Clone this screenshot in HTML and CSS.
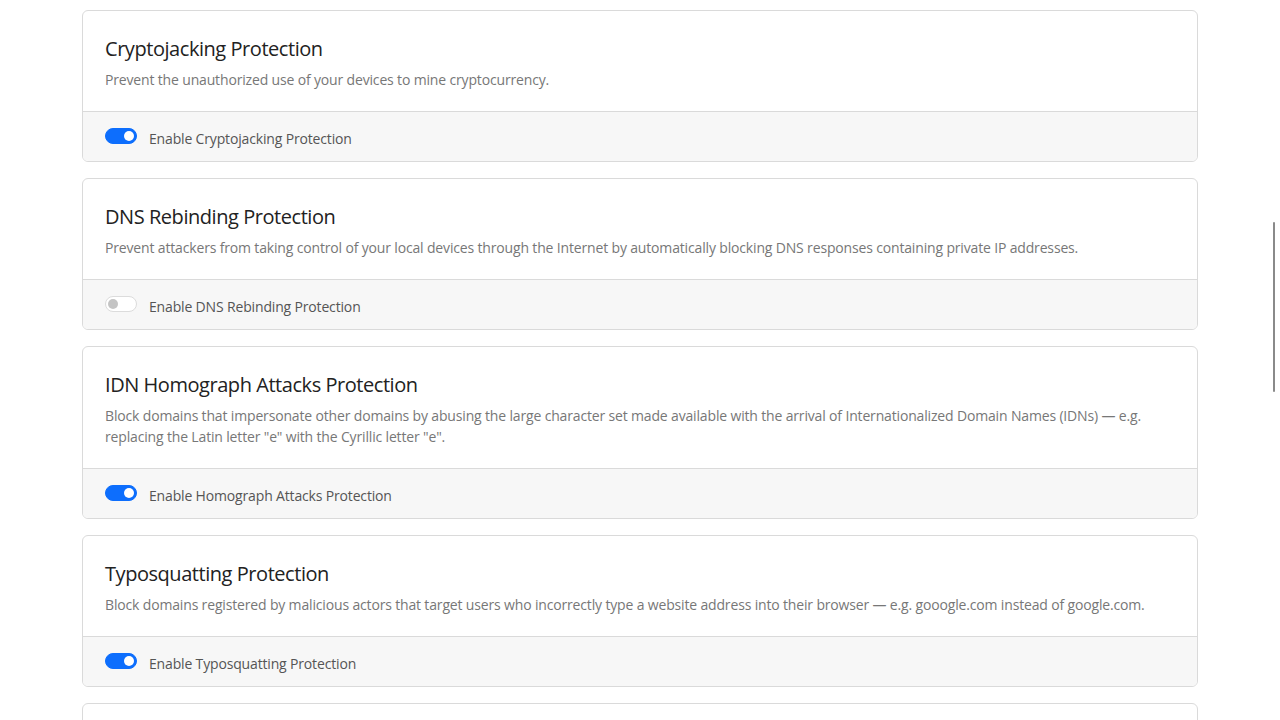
FILE: index.html
```html
<!DOCTYPE html>
<html lang="en">
<head>
<meta charset="utf-8">
<title>Security</title>
<link rel="stylesheet" href="styles.css">
</head>
<body>
<div class="container">
  <div class="card">
    <div class="card-body">
      <h5 class="card-title">Cryptojacking Protection</h5>
      <p class="card-text">Prevent the unauthorized use of your devices to mine cryptocurrency.</p>
    </div>
    <div class="card-footer">
      <label class="switch"><span class="toggle on"></span><span class="switch-label">Enable Cryptojacking Protection</span></label>
    </div>
  </div>
  <div class="card">
    <div class="card-body">
      <h5 class="card-title">DNS Rebinding Protection</h5>
      <p class="card-text">Prevent attackers from taking control of your local devices through the Internet by automatically blocking DNS responses containing private IP addresses.</p>
    </div>
    <div class="card-footer">
      <label class="switch"><span class="toggle"></span><span class="switch-label">Enable DNS Rebinding Protection</span></label>
    </div>
  </div>
  <div class="card">
    <div class="card-body">
      <h5 class="card-title">IDN Homograph Attacks Protection</h5>
      <p class="card-text">Block domains that impersonate other domains by abusing the large character set made available with the arrival of Internationalized Domain Names (IDNs) — e.g. replacing the Latin letter "e" with the Cyrillic letter "е".</p>
    </div>
    <div class="card-footer">
      <label class="switch"><span class="toggle on"></span><span class="switch-label">Enable Homograph Attacks Protection</span></label>
    </div>
  </div>
  <div class="card">
    <div class="card-body">
      <h5 class="card-title">Typosquatting Protection</h5>
      <p class="card-text">Block domains registered by malicious actors that target users who incorrectly type a website address into their browser — e.g. gooogle.com instead of google.com.</p>
    </div>
    <div class="card-footer">
      <label class="switch"><span class="toggle on"></span><span class="switch-label">Enable Typosquatting Protection</span></label>
    </div>
  </div>
  <div class="card">
    <div class="card-body">
      <h5 class="card-title">Domain Generation Algorithms (DGAs) Protection</h5>
      <p class="card-text">Block domains generated by Domain Generation Algorithms (DGAs) seen in various families of malware that can be used as rendezvous points with their command and control servers.</p>
    </div>
    <div class="card-footer">
      <label class="switch"><span class="toggle on"></span><span class="switch-label">Enable DGAs Protection</span></label>
    </div>
  </div>
</div>
<div class="scroll-thumb"></div>
</body>
</html>
```
FILE: styles.css
```css
* { box-sizing: border-box; }
html, body { margin: 0; padding: 0; background: #fff; }
body {
  font-family: "Segoe UI", "Open Sans", "Noto Sans", sans-serif;
  color: #212529;
  padding-top: 10px;
}
.container {
  max-width: 1140px;
  margin: 0 auto;
  padding: 0 12px;
}
.card {
  border: 1px solid #dadada;
  border-radius: 6px;
  margin-bottom: 16px;
  background: #fff;
  overflow: hidden;
}
.card-body {
  padding: 26px 22px 21px;
}
.card-title {
  margin: 0 0 8px;
  font-size: 20px;
  line-height: 24px;
  font-weight: 400;
  letter-spacing: -0.45px;
  color: #222;
}
.card-text {
  margin: 0;
  font-size: 14px;
  line-height: 21px;
  letter-spacing: -0.16px;
  color: #777;
}
.card-footer {
  border-top: 1px solid #dadada;
  background: #f7f7f7;
  padding: 12px 22px 13px;
}
.switch {
  display: flex;
  align-items: center;
  gap: 12px;
  height: 24px;
}
.toggle {
  position: relative;
  width: 32px;
  height: 16px;
  border-radius: 8px;
  border: 1px solid #dcdcdc;
  background: #fff;
  flex: none;
}
.toggle::after {
  content: "";
  position: absolute;
  left: 2px;
  top: 2px;
  width: 10px;
  height: 10px;
  border-radius: 50%;
  background: #c4c4c4;
}
.toggle.on {
  background: #0d6efd;
  border-color: #0d6efd;
}
.toggle.on::after {
  left: auto;
  right: 2px;
  background: #fff;
}
.switch-label {
  font-size: 14px;
  line-height: 21px;
  letter-spacing: -0.16px;
  color: #555;
  padding-top: 4px;
}
.scroll-thumb {
  position: fixed;
  right: 5px;
  top: 222px;
  width: 2px;
  height: 170px;
  background: #8a8a8a;
  border-radius: 1px;
}
```
